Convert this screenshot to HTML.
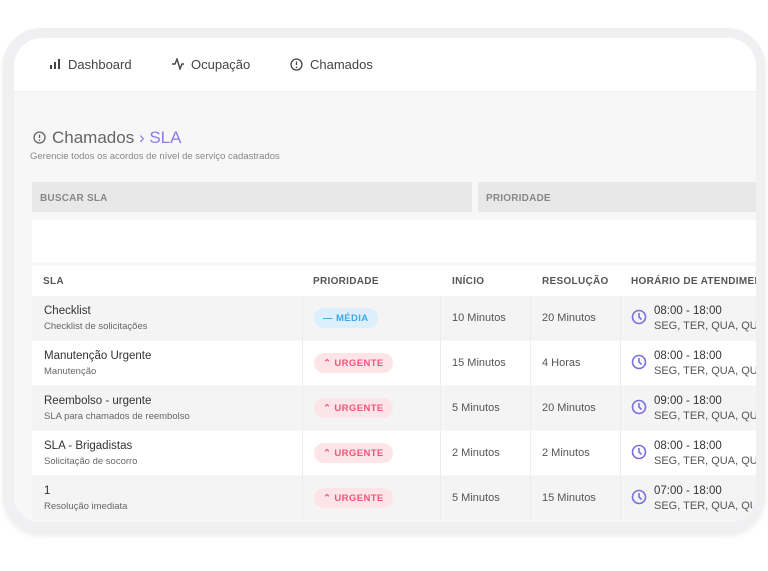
<!DOCTYPE html><html><head><style>
*{margin:0;padding:0;box-sizing:border-box}
body{width:768px;height:571px;background:#fff;font-family:"Liberation Sans",sans-serif;position:relative;overflow:hidden;color:#555}
.frame{position:absolute;left:3px;top:28px;width:762px;height:505px;border-radius:38px;background:#f0f0f2;box-shadow:0 3px 6px rgba(0,0,0,.08)}
.screen{position:absolute;left:14px;top:38px;width:742px;height:484px;border-radius:28px 28px 26px 26px;background:#f7f7f7;overflow:hidden}
.nav{position:absolute;left:0;top:0;width:742px;height:54px;background:#fff;border-bottom:1px solid #eee}
.nav span{position:absolute;top:19px;font-size:13px;color:#444}
.abs{position:absolute}
.inp{position:absolute;top:144px;height:30px;background:#e8e8e8;font-size:10px;color:#888;padding:11px 0 0 8px;font-weight:bold;letter-spacing:.2px}
.row{position:absolute;left:18px;width:724px;height:44px}
.c{position:absolute;font-size:11px;color:#555}
.t{font-size:11.5px;color:#333}
.s{font-size:9.5px;color:#666;margin-top:4px}
.pill{position:absolute;left:282px;top:12px;height:20px;border-radius:10px;font-size:9.5px;font-weight:bold;padding:5px 9px;letter-spacing:.4px}
.urg{background:#fde4e8;color:#f0567a}
.med{background:#dbeffc;color:#3da9ea}
.vl{position:absolute;top:0;height:44px;width:1px;background:#ececec}
.hd{position:absolute;top:0;left:18px;width:724px;height:30px;background:#fff;font-size:10px;color:#555;font-weight:bold;letter-spacing:.3px}
.hd span{position:absolute;top:10px}
</style></head><body>
<div class="frame"></div>
<div class="screen">
<div class="nav">
<svg class="abs" style="left:36px;top:21px" width="10" height="10"><rect x="0" y="6" width="2" height="4" fill="#444"/><rect x="4" y="3" width="2" height="7" fill="#444"/><rect x="8" y="0" width="2" height="10" fill="#444"/></svg>
<span style="left:54px">Dashboard</span>
<svg class="abs" style="left:157px;top:20px" width="14" height="12"><path d="M1 6h3l2-5 3 10 2-5h2" fill="none" stroke="#444" stroke-width="1.4"/></svg>
<span style="left:177px">Ocupação</span>
<svg class="abs" style="left:276px;top:20px" width="13" height="13"><circle cx="6.5" cy="6.5" r="5.5" fill="none" stroke="#444" stroke-width="1.3"/><path d="M6.5 3.5v3.5" stroke="#444" stroke-width="1.3"/><circle cx="6.5" cy="9.2" r=".8" fill="#444"/></svg>
<span style="left:296px">Chamados</span>
</div>
<svg class="abs" style="left:19px;top:93px" width="13" height="13"><circle cx="6.5" cy="6.5" r="5.5" fill="none" stroke="#666" stroke-width="1.3"/><path d="M6.5 3.5v3.5" stroke="#666" stroke-width="1.3"/><circle cx="6.5" cy="9.2" r=".8" fill="#666"/></svg>
<div class="abs" style="left:38px;top:90px;font-size:17px;color:#666">Chamados <span style="color:#8a7de8">› SLA</span></div>
<div class="abs" style="left:16px;top:113px;font-size:9.5px;color:#888">Gerencie todos os acordos de nível de serviço cadastrados</div>
<div class="inp" style="left:18px;width:440px">BUSCAR SLA</div>
<div class="inp" style="left:464px;width:278px">PRIORIDADE</div>
<div class="abs" style="left:18px;top:182px;width:724px;height:42px;background:#fff"></div>
<div style="position:absolute;left:0;top:228px;width:742px;height:256px">
<div class="hd"><span style="left:11px">SLA</span><span style="left:281px">PRIORIDADE</span><span style="left:420px">INÍCIO</span><span style="left:510px">RESOLUÇÃO</span><span style="left:599px;white-space:nowrap">HORÁRIO DE ATENDIMENTO</span></div>
</div>
</div>
<div style="position:absolute;left:14px;top:38px;width:742px;height:484px;border-radius:28px;overflow:hidden;pointer-events:none">
<div class="row" style="top:258px;background:#f4f4f4"><div class="c" style="left:12px;top:9px"><div class="t">Checklist</div><div class="s">Checklist de solicitações</div></div><div class="vl" style="left:270px"></div><div class="pill med" style="left:282px">— MÉDIA</div><div class="vl" style="left:408px"></div><div class="c" style="left:420px;top:16px">10 Minutos</div><div class="vl" style="left:498px"></div><div class="c" style="left:510px;top:16px">20 Minutos</div><div class="vl" style="left:588px"></div><svg class="abs" style="left:599px;top:13px" width="16" height="16"><circle cx="8" cy="8" r="6.5" fill="none" stroke="#7b6fe0" stroke-width="1.6"/><path d="M8 4v4l2.5 2.5" fill="none" stroke="#7b6fe0" stroke-width="1.6"/></svg><div class="c" style="left:622px;top:9px;white-space:nowrap"><div class="t">08:00 - 18:00</div><div style="margin-top:3px">SEG, TER, QUA, QUI</div></div></div>
<div class="row" style="top:303px;background:#fff"><div class="c" style="left:12px;top:9px"><div class="t">Manutenção Urgente</div><div class="s">Manutenção</div></div><div class="vl" style="left:270px"></div><div class="pill urg">⌃ URGENTE</div><div class="vl" style="left:408px"></div><div class="c" style="left:420px;top:16px">15 Minutos</div><div class="vl" style="left:498px"></div><div class="c" style="left:510px;top:16px">4 Horas</div><div class="vl" style="left:588px"></div><svg class="abs" style="left:599px;top:13px" width="16" height="16"><circle cx="8" cy="8" r="6.5" fill="none" stroke="#7b6fe0" stroke-width="1.6"/><path d="M8 4v4l2.5 2.5" fill="none" stroke="#7b6fe0" stroke-width="1.6"/></svg><div class="c" style="left:622px;top:9px;white-space:nowrap"><div class="t">08:00 - 18:00</div><div style="margin-top:3px">SEG, TER, QUA, QUI</div></div></div>
<div class="row" style="top:348px;background:#f4f4f4"><div class="c" style="left:12px;top:9px"><div class="t">Reembolso - urgente</div><div class="s">SLA para chamados de reembolso</div></div><div class="vl" style="left:270px"></div><div class="pill urg">⌃ URGENTE</div><div class="vl" style="left:408px"></div><div class="c" style="left:420px;top:16px">5 Minutos</div><div class="vl" style="left:498px"></div><div class="c" style="left:510px;top:16px">20 Minutos</div><div class="vl" style="left:588px"></div><svg class="abs" style="left:599px;top:13px" width="16" height="16"><circle cx="8" cy="8" r="6.5" fill="none" stroke="#7b6fe0" stroke-width="1.6"/><path d="M8 4v4l2.5 2.5" fill="none" stroke="#7b6fe0" stroke-width="1.6"/></svg><div class="c" style="left:622px;top:9px;white-space:nowrap"><div class="t">09:00 - 18:00</div><div style="margin-top:3px">SEG, TER, QUA, QUI</div></div></div>
<div class="row" style="top:393px;background:#fff"><div class="c" style="left:12px;top:9px"><div class="t">SLA - Brigadistas</div><div class="s">Solicitação de socorro</div></div><div class="vl" style="left:270px"></div><div class="pill urg">⌃ URGENTE</div><div class="vl" style="left:408px"></div><div class="c" style="left:420px;top:16px">2 Minutos</div><div class="vl" style="left:498px"></div><div class="c" style="left:510px;top:16px">2 Minutos</div><div class="vl" style="left:588px"></div><svg class="abs" style="left:599px;top:13px" width="16" height="16"><circle cx="8" cy="8" r="6.5" fill="none" stroke="#7b6fe0" stroke-width="1.6"/><path d="M8 4v4l2.5 2.5" fill="none" stroke="#7b6fe0" stroke-width="1.6"/></svg><div class="c" style="left:622px;top:9px;white-space:nowrap"><div class="t">08:00 - 18:00</div><div style="margin-top:3px">SEG, TER, QUA, QUI</div></div></div>
<div class="row" style="top:438px;background:#f4f4f4"><div class="c" style="left:12px;top:9px"><div class="t">1</div><div class="s">Resolução imediata</div></div><div class="vl" style="left:270px"></div><div class="pill urg">⌃ URGENTE</div><div class="vl" style="left:408px"></div><div class="c" style="left:420px;top:16px">5 Minutos</div><div class="vl" style="left:498px"></div><div class="c" style="left:510px;top:16px">15 Minutos</div><div class="vl" style="left:588px"></div><svg class="abs" style="left:599px;top:13px" width="16" height="16"><circle cx="8" cy="8" r="6.5" fill="none" stroke="#7b6fe0" stroke-width="1.6"/><path d="M8 4v4l2.5 2.5" fill="none" stroke="#7b6fe0" stroke-width="1.6"/></svg><div class="c" style="left:622px;top:9px;white-space:nowrap"><div class="t">07:00 - 18:00</div><div style="margin-top:3px">SEG, TER, QUA, QUI</div></div></div>
</div>
</body></html>
